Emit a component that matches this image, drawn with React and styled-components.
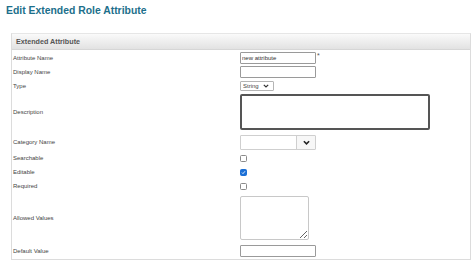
import React from "react";
import styled, { createGlobalStyle } from "styled-components";

const Global = createGlobalStyle`
  html, body { margin: 0; padding: 0; background: #fff; }
  body { font-family: "Liberation Sans", Arial, sans-serif; color: #333; }
`;

const Page = styled.div`
  width: 474px;
  height: 265px;
  overflow: hidden;
  padding: 5px 3px 0 11px;
  box-sizing: border-box;
`;

const Title = styled.h1`
  margin: 0 0 16px -5px;
  font-size: 10.4px;
  line-height: 12px;
  font-weight: bold;
  color: #1c6f8b;
`;

const Panel = styled.div`
  border: 1px solid #dcdcdc;
  border-top-color: #e6e6e6;
`;

const Header = styled.div`
  height: 15px;
  line-height: 15px;
  padding-left: 4px;
  font-size: 7.2px;
  font-weight: bold;
  color: #555;
  background: linear-gradient(#fafafa, #e2e2e2);
  border-bottom: 1px solid #d6d6d6;
`;

const Body = styled.div`
  padding: 1px 0 0 1px;
`;

const Row = styled.div`
  display: grid;
  grid-template-columns: 227px 1fr;
  align-items: center;
  height: ${(p) => p.h || 14}px;
  margin-top: ${(p) => p.mt || 0}px;
`;

const Label = styled.div`
  font-size: 6px;
  color: #444;
`;

const Field = styled.div`
  display: flex;
  align-items: center;
`;

const TextInput = styled.input`
  box-sizing: border-box;
  width: 76px;
  height: ${(p) => p.h || 12}px;
  margin: 0;
  padding: 0 1px;
  font: 6px "Liberation Sans", Arial, sans-serif;
  color: #333;
  border: 1px solid #9a9a9a;
  border-radius: 1px;
  outline: none;
`;

const Star = styled.span`
  font-size: 7px;
  margin-left: 1px;
  align-self: flex-start;
  color: #555;
`;

const SelectWrap = styled.div`
  position: relative;
  width: 34px;
  height: 10px;
  font-size: 6px;
  line-height: 10px;
`;

const Select = styled.select`
  display: block;
  appearance: none;
  box-sizing: border-box;
  width: 100%;
  height: 10px;
  margin: 0;
  padding: 0 0 0 2px;
  font: 6px/8px "Liberation Sans", Arial, sans-serif;
  color: #444;
  background: #fff;
  border: 1px solid #b5b5b5;
  border-radius: 1px;
  outline: none;
`;

const Caret = styled.svg`
  position: absolute;
  right: 5px;
  top: 3px;
  pointer-events: none;
`;

const Area = styled.textarea`
  box-sizing: border-box;
  width: ${(p) => p.w}px;
  height: ${(p) => p.h}px;
  margin: 0;
  resize: ${(p) => (p.thick ? "none" : "both")};
  border: ${(p) => (p.thick ? "2px solid #555" : "1px solid #c8c8c8")};
  border-radius: 2px;
  outline: none;
`;

const Combo = styled.div`
  display: flex;
  width: 76px;
  height: 15px;
  box-sizing: border-box;
  border: 1px solid #cfcfcf;
  border-radius: 1px;
`;

const ComboText = styled.div`
  flex: 1;
  border-right: 1px solid #cfcfcf;
`;

const ComboBtn = styled.div`
  width: 18px;
  display: flex;
  align-items: center;
  justify-content: center;
  background: #f7f7f7;
`;

const Check = styled.input`
  appearance: none;
  box-sizing: border-box;
  width: 7px;
  height: 7px;
  margin: 0;
  border: 1px solid #8a8a8a;
  border-radius: 1.5px;
  background: #fff;
  &:checked {
    border-color: #1a6fd6;
    background: #1a6fd6
      url("data:image/svg+xml,%3Csvg xmlns='http://www.w3.org/2000/svg' viewBox='0 0 7 7'%3E%3Cpath d='M1.3 3.6l1.5 1.5 2.9-3.4' fill='none' stroke='white' stroke-width='1.2'/%3E%3C/svg%3E")
      center / 100% no-repeat;
  }
`;

export default function App() {
  return (
    <Page>
      <Global />
      <Title>Edit Extended Role Attribute</Title>
      <Panel>
        <Header>Extended Attribute</Header>
        <Body>
          <Row>
            <Label>Attribute Name</Label>
            <Field>
              <TextInput defaultValue="new attribute" />
              <Star>*</Star>
            </Field>
          </Row>
          <Row>
            <Label>Display Name</Label>
            <Field>
              <TextInput />
            </Field>
          </Row>
          <Row>
            <Label>Type</Label>
            <Field>
              <SelectWrap>
                <Select defaultValue="String">
                  <option>String</option>
                </Select>
                <Caret width="6" height="4" viewBox="0 0 6 4">
                  <path d="M0.8 0.8l2.2 2.2 2.2-2.2" fill="none" stroke="#333" strokeWidth="1.2" />
                </Caret>
              </SelectWrap>
            </Field>
          </Row>
          <Row h={38}>
            <Label>Description</Label>
            <Field>
              <Area thick w={190} h={36} />
            </Field>
          </Row>
          <Row h={18} mt={2}>
            <Label>Category Name</Label>
            <Field>
              <Combo>
                <ComboText />
                <ComboBtn>
                  <svg width="7" height="5" viewBox="0 0 8 5">
                    <path d="M1 1l3 3 3-3" fill="none" stroke="#222" strokeWidth="1.8" />
                  </svg>
                </ComboBtn>
              </Combo>
            </Field>
          </Row>
          <Row>
            <Label>Searchable</Label>
            <Field>
              <Check type="checkbox" />
            </Field>
          </Row>
          <Row>
            <Label>Editable</Label>
            <Field>
              <Check type="checkbox" defaultChecked />
            </Field>
          </Row>
          <Row>
            <Label>Required</Label>
            <Field>
              <Check type="checkbox" />
            </Field>
          </Row>
          <Row h={47} mt={1}>
            <Label>Allowed Values</Label>
            <Field>
              <Area w={69} h={44} />
            </Field>
          </Row>
          <Row h={16} mt={2}>
            <Label>Default Value</Label>
            <Field>
              <TextInput />
            </Field>
          </Row>
        </Body>
      </Panel>
    </Page>
  );
}
